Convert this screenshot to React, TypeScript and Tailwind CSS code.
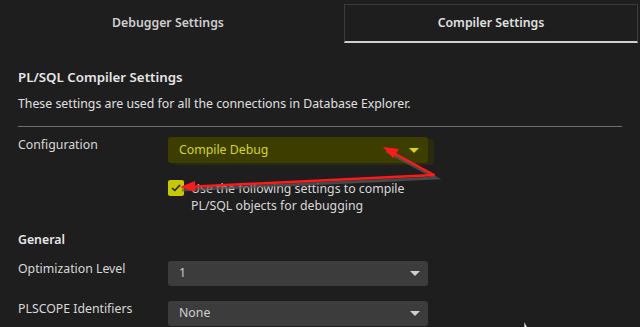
import React from "react";

function Caret({ color }: { color: string }) {
  return (
    <svg width="10" height="5" viewBox="0 0 10 5">
      <path d="M0 0 H10 L5 5 Z" fill={color} />
    </svg>
  );
}

function Select({ value, highlight }: { value: string; highlight?: boolean }) {
  return (
    <div
      className={
        highlight
          ? "flex h-[26px] w-[260px] items-center justify-between rounded-[3px] bg-[#3d3d00] pl-[11px] pr-[9px] text-[#d6d61a] shadow-[6px_2px_0_#2a2a10]"
          : "flex h-[25px] w-[260px] items-center justify-between rounded-[3px] bg-[#3c3c3c] pl-[11px] pr-[8px] text-[#d0d0d0]"
      }
    >
      <span className="leading-none">{value}</span>
      <Caret color={highlight ? "#d6d61a" : "#cfcfcf"} />
    </div>
  );
}

export default function App() {
  return (
    <div
      className="relative h-[327px] w-[640px] overflow-hidden bg-[#1e1e1e] text-[12.3px] text-[#d4d4d4]"
      style={{ fontFamily: '"Noto Sans", sans-serif' }}
    >
      {/* tabs */}
      <div className="flex h-[43px] pt-[4px]">
        <div className="flex w-[336px] items-center justify-center font-semibold text-[#cfcfcf]">
          Debugger Settings
        </div>
        <div className="ml-[8px] flex w-[294px] items-center justify-center border border-b-2 border-[#3a3a3a] border-b-[#cfcfcf] font-semibold text-[#e0e0e0]">
          Compiler Settings
        </div>
      </div>

      <div className="px-[18px]">
        <div className="mt-[25px] text-[13.3px] font-semibold leading-[18px] text-[#e6e6e6]">
          PL/SQL Compiler Settings
        </div>
        <div className="mt-[9px] leading-[18px] text-[#e0e0e0]">
          These settings are used for all the connections in Database Explorer.
        </div>
        <div className="mt-[13px] h-px bg-[#6e6e6e]" />

        <div className="mt-[10px] flex">
          <div className="w-[150px] leading-[16px] text-[#d8d8d8]">Configuration</div>
          <Select value="Compile Debug" highlight />
        </div>

        <div className="ml-[150px] mt-[17px] flex gap-[7px]">
          <div className="flex h-[16px] w-[16px] shrink-0 items-center justify-center rounded-[2px] bg-[#c8c800]">
            <svg width="10" height="8" viewBox="0 0 10 8">
              <path d="M1 4 L3.8 6.5 L9 1" stroke="#1e1e1e" strokeWidth="1.6" fill="none" />
            </svg>
          </div>
          <div className="leading-[17px] text-[#d8d8d8]">
            Use the following settings to compile
            <br />
            PL/SQL objects for debugging
          </div>
        </div>

        <div className="mt-[17px] font-semibold leading-[18px] text-[#e6e6e6]">General</div>

        <div className="mt-[12px] flex">
          <div className="w-[150px] leading-[16px] text-[#d8d8d8]">Optimization Level</div>
          <Select value="1" />
        </div>
        <div className="mt-[15px] flex">
          <div className="w-[150px] leading-[16px] text-[#d8d8d8]">PLSCOPE Identifiers</div>
          <Select value="None" />
        </div>
      </div>

      {/* red annotation arrows */}
      <svg className="pointer-events-none absolute left-0 top-0" width="640" height="327">
        <g stroke="#5a5a5a" strokeWidth="3" fill="none" opacity="0.7">
          <path d="M386 151 L436 178 L182 190" />
        </g>
        <g stroke="#ff1a1a" strokeWidth="2.5" fill="none" strokeLinejoin="round">
          <path d="M388 150 L434 175 L186 187" />
        </g>
        <path d="M383 147 L399 149 L393 158 Z" fill="#ff1a1a" />
        <path d="M180 187 L195 181 L195 192 Z" fill="#ff1a1a" />
        {/* mouse pointer */}
        <path d="M524 321 L524 330 L526.5 327.5 L529 330 Z" fill="#f0f0f0" stroke="#111" strokeWidth="0.7" />
      </svg>
    </div>
  );
}
